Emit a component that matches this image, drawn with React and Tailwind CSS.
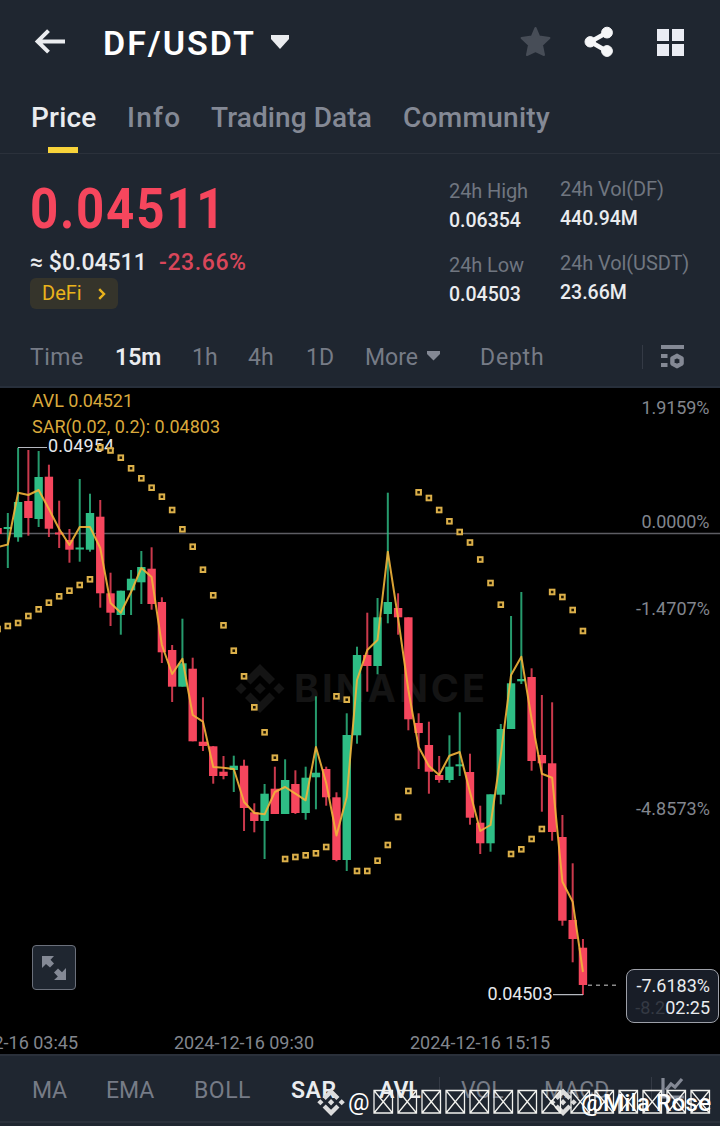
import React from "react";

const GREEN = "#2ebd85";
const RED = "#f6465d";

// Each candle: [up, high, low, bodyTop, bodyBottom, average, sar]
const CANDLES = [
  [0, 528, 534, 528, 534, 547, 629],
  [1, 513, 568, 527, 529, 544.5, 626],
  [1, 447.7, 541.7, 502, 537.3, 492.7, 623],
  [0, 450, 535.7, 501, 518, 495, 616],
  [1, 451, 527, 477, 519, 490, 609.3],
  [0, 464.7, 537, 476.7, 528.7, 509, 602.7],
  [0, 500.7, 548, 532.5, 534.5, 529, 596.3],
  [0, 529, 562.7, 540, 549.7, 545, 590.7],
  [1, 479, 561.7, 547.5, 549.5, 527, 585],
  [1, 493.7, 551.7, 513, 549.7, 527, 579.3],
  [0, 500, 607.7, 516.7, 593.3, 548, 447.3],
  [0, 572.7, 626, 593.3, 612.7, 603, 450.5],
  [1, 590.7, 634.7, 590.7, 615, 612.7, 457.7],
  [1, 570, 615, 578.7, 590.3, 592, 468.3],
  [1, 551, 604, 567, 582.3, 568, 478.3],
  [0, 547.3, 609.7, 568.7, 604, 577, 487.7],
  [0, 597.3, 663, 602, 652.3, 645, 496.7],
  [0, 645, 702, 650, 686.7, 674, 510],
  [1, 618.7, 686.7, 663.3, 686.7, 658.7, 529.3],
  [0, 657.7, 741.3, 668.7, 741.3, 715, 546.7],
  [0, 697.3, 751, 741.7, 746, 721.7, 569.7],
  [0, 746, 783.7, 746.3, 776, 767, 595.3],
  [0, 756, 779.3, 771.7, 776, 767.7, 625.3],
  [1, 755.7, 792, 765.7, 770, 769, 650.7],
  [0, 759.7, 831, 765.7, 808, 802, 676.3],
  [0, 803.3, 832.3, 812.3, 821, 813, 707.3],
  [1, 784, 859, 793.7, 821, 814.3, 732.3],
  [0, 766.7, 814, 788.7, 814, 792, 757.7],
  [1, 759.3, 814, 780, 814, 787, 859],
  [0, 770.3, 814, 784, 813, 793.7, 857],
  [1, 766.7, 819.7, 777.7, 813, 800.3, 855.3],
  [1, 696.3, 809.3, 772.7, 777.3, 747, 853.3],
  [0, 766.7, 805.7, 769, 797.3, 783, 847],
  [0, 792.3, 861.3, 797.3, 860, 835.5, 696.3],
  [1, 713.3, 871, 735, 860, 797, 699.7],
  [1, 646.7, 743.7, 655, 735.3, 680, 871],
  [0, 612.7, 691.7, 655, 666, 650, 871],
  [1, 598, 674.3, 617.3, 666, 640, 860.7],
  [1, 492.7, 623.3, 602, 614, 551.7, 845],
  [0, 593.3, 634.7, 608, 617.3, 618, 817],
  [0, 617.3, 730.3, 617.3, 719.3, 690, 791],
  [0, 713.3, 769, 723, 733, 747, 492.3],
  [0, 721.7, 793.7, 745, 771.7, 766, 498],
  [0, 756, 782.7, 775, 780, 775, 510],
  [1, 735.3, 782.7, 766.7, 780, 755.7, 521.3],
  [1, 712.3, 776, 764.3, 766.3, 752, 532],
  [0, 753.7, 824.7, 772, 817.7, 792, 542.5],
  [0, 805.7, 854, 822.7, 843.3, 831, 559.5],
  [1, 794.3, 851.7, 794.3, 843.3, 825, 583],
  [1, 724, 804.3, 729, 794.7, 755, 604.7],
  [1, 616, 729, 683.3, 729, 675, 854],
  [1, 592, 684, 679, 681.3, 656.7, 849.3],
  [0, 668.3, 770.7, 677, 761, 719, 839],
  [0, 695, 811.7, 755, 763.3, 773.7, 829],
  [0, 702.3, 840.7, 763.3, 832, 777.7, 592],
  [0, 815, 925.7, 837, 920.7, 881.7, 597],
  [0, 863.3, 962.3, 920, 939, 901.7, 610],
  [0, 939, 995, 947.7, 985, 972, 631],
];
const xAt = (i) => 18.1 + 10.27 * (i - 2);

// The exchange's diamond mark, drawn in a 48-unit box.
function Mark({ x, y, size, fill }) {
  return (
    <g transform={`translate(${x} ${y}) scale(${size / 48})`} fill={fill}>
      <path d="M24 0L38.7 14.7L33.3 20.1L24 10.8L14.7 20.1L9.3 14.7Z" />
      <path d="M24 48L38.7 33.3L33.3 27.9L24 37.2L14.7 27.9L9.3 33.3Z" />
      <path d="M0 24L5.4 18.6L10.8 24L5.4 29.4ZM37.2 24L42.6 18.6L48 24L42.6 29.4ZM18.5 24L24 18.5L29.5 24L24 29.5Z" />
    </g>
  );
}

function Label({ x, y, w, children, fill = "#82868e", size = 18 }) {
  return (
    <text x={x} y={y} textLength={w} fill={fill} fontSize={size} fontFamily="Roboto, sans-serif">
      {children}
    </text>
  );
}

function Chart() {
  return (
    <svg className="block h-[666px] w-[720px]" viewBox="0 388 720 666">
      <Mark x={235.5} y={664} size={49} fill="#141414" />
      <text x="294" y="701.5" textLength="191" fill="#141414" fontSize="38" fontWeight="700" fontFamily="Inter, sans-serif">
        BINANCE
      </text>
      <path d="M0 533.5H720" stroke="#5d5d63" strokeWidth="1.3" />
      {CANDLES.map(([up, hi, lo, top, bot], i) => (
        <g key={i} fill={up ? GREEN : RED}>
          <rect x={xAt(i) - 1} y={hi} width="2" height={lo - hi} opacity="0.82" />
          <rect x={xAt(i) - 4.2} y={top} width="8.4" height={bot - top} />
        </g>
      ))}
      <Label x={48} y={452} w={66} fill="#e6e8ec">0.04954</Label>
      <path d="M18 447.5H47M553 994.7H583" stroke="#b5b8bf" strokeWidth="1.2" />
      <polyline
        points={CANDLES.map((c, i) => `${xAt(i)},${c[5]}`).join(" ")}
        fill="none"
        stroke="#f2b43a"
        strokeOpacity="0.9"
        strokeWidth="2"
        strokeLinejoin="round"
      />
      {CANDLES.map((c, i) => (
        <rect key={i} x={xAt(i) - 2.3} y={c[6] - 2.3} width="4.6" height="4.6" fill="#1c1400" stroke="#dcb04a" strokeWidth="2" />
      ))}
      <Label x={32} y={407.3} w={101} fill="#d9a93c">AVL 0.04521</Label>
      <Label x={32} y={433} w={188} fill="#d9a93c">SAR(0.02, 0.2): 0.04803</Label>
      <Label x={641.5} y={414.2} w={68}>1.9159%</Label>
      <Label x={641.5} y={528.2} w={68}>0.0000%</Label>
      <Label x={636} y={615.2} w={74}>-1.4707%</Label>
      <Label x={636} y={815.3} w={74}>-4.8573%</Label>
      <Label x={487.5} y={1000.2} w={65} fill="#e6e8ec">0.04503</Label>
      <path d="M588 985.2H616" stroke="#8b8b8b" strokeWidth="1.5" strokeDasharray="4 4" />
      <Label x={-62} y={1049.2} w={140}>2024-12-16 03:45</Label>
      <Label x={174} y={1049.2} w={140}>2024-12-16 09:30</Label>
      <Label x={410} y={1049.2} w={140}>2024-12-16 15:15</Label>
    </svg>
  );
}

function Stat({ label, value }) {
  return (
    <div className="flex h-[74px] flex-col gap-[10px] whitespace-nowrap">
      <span className="text-[20px] leading-[20px] tracking-[-0.1px] text-[#707680]">{label}</span>
      <span className="text-[19.5px] leading-[20px] font-medium text-[#eaecef]">{value}</span>
    </div>
  );
}

function Watermark() {
  const boxes = [0, 24, 48, 72, 96, 120, 144, 168, 197, 221, 245, 269, 293, 317];
  return (
    <div className="absolute top-[1080px] left-[316px] h-[40px] w-[404px]">
      <svg className="block h-full w-full" viewBox="316 1080 404 40">
        <Mark x={317.3} y={1088.5} size={27.5} fill="#dcdcdc" />
        <Mark x={549.3} y={1088.5} size={27.5} fill="#dcdcdc" />
        <text x="348" y="1109.5" fontSize="24" fill="#fff" fontFamily="Roboto, sans-serif">@</text>
        {boxes.map((b) => (
          <path
            key={b}
            transform={`translate(${374 + b} 1090.5)`}
            d="M0 0H18.5V22.5H0ZM0 0L18.5 22.5M18.5 0L0 22.5"
            fill="none"
            stroke="#f2f2ee"
            strokeWidth="1.3"
          />
        ))}
        <text x="581" y="1110.5" textLength="130" fontSize="24.5" fill="#fff" fontWeight="500" fontFamily="Roboto, sans-serif">
          @Mila Rose
        </text>
      </svg>
    </div>
  );
}

export default function App() {
  return (
    <div className="relative flex h-[1126px] w-[720px] flex-col overflow-hidden bg-[#1f2630] font-['Roboto',sans-serif] whitespace-nowrap">
      <header className="flex h-[84px] shrink-0 items-center">
        <svg className="ml-[34px] h-[26px] w-[32px]" viewBox="0 0 32 26" fill="none" stroke="#eaecef" strokeWidth="4">
          <path d="M31 12.4H4M14.5 1.6L3.6 12.4L14.5 23.2" />
        </svg>
        <h1 className="ml-[37px] w-[168px] pt-[2px] text-[34px] leading-[40px] font-semibold tracking-[2px] text-white">DF/USDT</h1>
        <svg className="h-[15px] w-[18px]" viewBox="0 0 18 15" fill="#eaecef">
          <path d="M0 0H18V4L9 14L0 4Z" />
        </svg>
        <svg className="ml-[231px] h-[32px] w-[31px]" viewBox="0 0 31 32">
          <path d="M15.5 2L19.2 10.6L29.4 12L22 19L24 29L15.5 25.2L7 29L9 19L1.6 12L11.8 10.6Z" fill="#474d57" stroke="#474d57" strokeWidth="2" strokeLinejoin="round" />
        </svg>
        <svg className="ml-[33px] h-[32px] w-[30px]" viewBox="0 0 30 32" fill="#f5f6f8" stroke="#f5f6f8">
          <path d="M23 6.5L6.5 15.8L23 25.2" fill="none" strokeWidth="4.5" />
          <circle cx="23" cy="6.6" r="5.4" />
          <circle cx="6.2" cy="15.8" r="5.2" />
          <circle cx="23" cy="25" r="5.4" />
        </svg>
        <div className="ml-[42.5px] grid grid-cols-2 gap-[3px]">
          <i className="size-[12px] bg-[#eaecf3]" />
          <i className="size-[12px] bg-[#eaecf3]" />
          <i className="size-[12px] bg-[#eaecf3]" />
          <i className="size-[12px] bg-[#eaecf3]" />
        </div>
      </header>

      <nav className="flex h-[70px] shrink-0 border-b border-[#2b313b] pl-[31px] text-[28px] leading-[68px] font-medium text-[#848995]">
        <div className="relative w-[96px] tracking-[0.2px] text-[#eaecef]">
          Price
          <span className="absolute bottom-0 left-[17px] h-[6px] w-[30px] bg-[#f8d33a]" />
        </div>
        <span className="w-[84px] tracking-[1.3px]">Info</span>
        <span className="w-[192px] tracking-[0.1px]">Trading Data</span>
        <span className="tracking-[0.3px]">Community</span>
      </nav>

      <section className="flex h-[173px] shrink-0">
        <div className="flex w-[449px] flex-col pl-[30px]">
          <div className="mt-[27px] h-[56px] w-[230px] origin-left scale-x-[0.88] text-[56px] leading-[56px] font-bold tracking-[2px] text-[#f6465d]">0.04511</div>
          <div className="mt-[14px] flex h-[24px] text-[23px] leading-[24px] font-medium">
            <span className="w-[129px] text-[#eaecef]">≈ $0.04511</span>
            <span className="tracking-[0.6px] text-[#d9465a]">-23.66%</span>
          </div>
          <div className="mt-[3px] flex h-[31px] w-[88px] items-center rounded-[6px] bg-[#35342b] pl-[12px] text-[20px] leading-[31px] text-[#eab31c]">
            <span className="w-[56px]">DeFi</span>
            <svg className="h-[12px] w-[8px]" viewBox="0 0 8 12" fill="none" stroke="#eab31c" strokeWidth="2.4">
              <path d="M1.2 1.2L6 6L1.2 10.8" />
            </svg>
          </div>
        </div>
        <div className="w-[111px] pt-[27px]">
          <Stat label="24h High" value="0.06354" />
          <Stat label="24h Low" value="0.04503" />
        </div>
        <div className="pt-[25px]">
          <Stat label="24h Vol(DF)" value="440.94M" />
          <Stat label="24h Vol(USDT)" value="23.66M" />
        </div>
      </section>

      <nav className="flex h-[61px] shrink-0 items-center border-b-2 border-[#272f3b] pl-[30px] text-[23px] text-[#767b86] [&>span]:relative [&>span]:top-[2px]">
        <span className="w-[85px] tracking-[0.5px]">Time</span>
        <span className="w-[77px] font-semibold text-[#eaecef]">15m</span>
        <span className="w-[56px]">1h</span>
        <span className="w-[58px]">4h</span>
        <span className="w-[59px]">1D</span>
        <span className="w-[63px]">More</span>
        <svg className="mb-[2px] ml-[-1px] h-[10px] w-[13px]" viewBox="0 0 13 10" fill="#848995">
          <path d="M0 0H13V3L6.5 9.5L0 3Z" />
        </svg>
        <span className="ml-[40px] w-[162px] tracking-[0.8px]">Depth</span>
        <i className="h-[24px] w-px bg-[#343a45]" />
        <svg className="ml-[17.5px] h-[24px] w-[23px]" viewBox="0 0 23 24" fill="#848995">
          <path d="M0 0H23V4H0ZM0 9H6.5V13H0ZM0 18H6.5V22H0Z" />
          <path d="M16 10.8L20.6 13.4V18.6L16 21.2L11.4 18.6V13.4Z" fill="none" stroke="#848995" strokeWidth="4.4" strokeLinejoin="round" />
        </svg>
      </nav>

      <main className="relative h-[666px] shrink-0 bg-black">
        <Chart />
        <button className="absolute top-[557px] left-[32px] flex h-[45px] w-[44px] items-center justify-center rounded-[4px] border border-[#6b707b] bg-[#1f2630]">
          <svg className="h-[26px] w-[26px]" viewBox="0 0 26 26" fill="#848995">
            <path d="M1 1H13L9.5 4.8L13 8.4L9 12.5L5 8.9L1 13ZM25 25H13L16.8 21.4L13 17.6L17 13.5L21 17.2L25 13Z" />
          </svg>
        </button>
        <div className="absolute top-[581px] left-[626px] flex h-[54px] w-[93px] flex-col rounded-[8px] border-[1.5px] border-[#9da0a8] bg-[#181d27] pt-[5px] pr-[8px] text-right text-[18px] leading-[22px] text-[#eaecef]">
          <span>-7.6183%</span>
          <span className="flex justify-end">
            <span className="text-[#343943]">-8.2</span>
            <span>02:25</span>
          </span>
        </div>
      </main>

      <footer className="flex h-[69px] shrink-0 items-center border-y-2 border-[#2a303a] pl-[32px] text-[23px] text-[#767b86] [&>span]:relative [&>span]:top-[3px]">
        <span className="w-[74px] tracking-[-0.4px]">MA</span>
        <span className="w-[88px]">EMA</span>
        <span className="w-[97px] tracking-[0.5px]">BOLL</span>
        <span className="w-[88px] font-semibold tracking-[0.5px] text-[#eaecef]">SAR</span>
        <span className="w-[60px] font-semibold text-[#eaecef]">AVL</span>
        <i className="h-[24px] w-px bg-[#343a45]" />
        <span className="ml-[21px] w-[83px]">VOL</span>
        <span className="w-[107px]">MACD</span>
        <i className="h-[24px] w-px bg-[#343a45]" />
        <svg className="ml-[9px] h-[24px] w-[23px]" viewBox="0 0 23 24" fill="none" stroke="#848995" strokeWidth="3.2">
          <path d="M2 1V20H23M5 13L10 7L14 10L21 2" />
        </svg>
      </footer>
      <Watermark />
    </div>
  );
}
